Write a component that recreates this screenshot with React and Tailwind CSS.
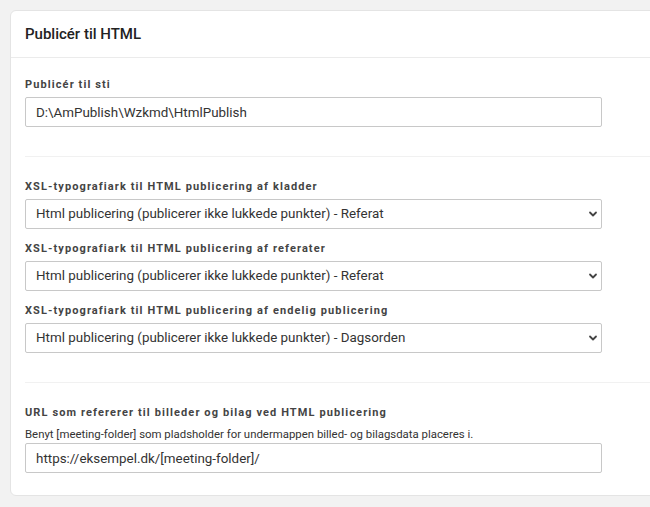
import React from "react";

const font = { fontFamily: "Roboto, 'Liberation Sans', sans-serif" };

const Label = ({ children }) => (
  <div className="text-[11px] leading-4 font-bold tracking-[0.1em] text-[#444] mb-1">
    {children}
  </div>
);

const TextInput = ({ value }) => (
  <input
    type="text"
    defaultValue={value}
    className="block w-[577px] h-[30px] px-[10px] text-[13.4px] text-[#333] border border-[#c8c8c8] rounded-[2px] outline-none bg-white"
  />
);

const Chevron = () => (
  <svg
    width="10"
    height="10"
    viewBox="0 0 10 10"
    className="absolute right-[4px] top-[10px] pointer-events-none"
  >
    <path d="M2 3.5 L5 6.5 L8 3.5" fill="none" stroke="#444" strokeWidth="1.8" strokeLinecap="round" strokeLinejoin="round" />
  </svg>
);

const Select = ({ value }) => (
  <div className="relative w-[577px]">
    <select
      defaultValue={value}
      className="block appearance-none w-full h-[30px] pl-[10px] pr-6 text-[13.4px] text-[#333] border border-[#c8c8c8] rounded-[2px] outline-none bg-white"
    >
      <option>{value}</option>
    </select>
    <Chevron />
  </div>
);

const App = () => {
  const xsl = [
    {
      label: "XSL-typografiark til HTML publicering af kladder",
      value: "Html publicering (publicerer ikke lukkede punkter) - Referat",
    },
    {
      label: "XSL-typografiark til HTML publicering af referater",
      value: "Html publicering (publicerer ikke lukkede punkter) - Referat",
    },
    {
      label: "XSL-typografiark til HTML publicering af endelig publicering",
      value: "Html publicering (publicerer ikke lukkede punkter) - Dagsorden",
    },
  ];

  return (
    <div className="min-h-[507px] w-[650px] overflow-hidden bg-[#f2f2f2] pt-[10px]" style={font}>
      <div className="ml-[10px] w-[680px] bg-white border border-[#e4e4e4] rounded-[6px]">
        <div className="h-[47px] flex items-center pl-[14px] border-b border-[#ebebeb]">
          <h1 className="text-[15px] font-medium text-[#222]">Publicér til HTML</h1>
        </div>

        <div className="ml-[14px]">
          <div className="pt-[19px] pb-[29px] border-b border-[#f1f1f1]">
            <Label>Publicér til sti</Label>
            <TextInput value="D:\AmPublish\Wzkmd\HtmlPublish" />
          </div>

          <div className="pt-[22px] pb-[29px] border-b border-[#f1f1f1] flex flex-col gap-[12px]">
            {xsl.map((item) => (
              <div key={item.label}>
                <Label>{item.label}</Label>
                <Select value={item.value} />
              </div>
            ))}
          </div>

          <div className="pt-[22px] pb-[22px]">
            <Label>URL som refererer til billeder og bilag ved HTML publicering</Label>
            <div className="text-[11.4px] leading-4 text-[#333] mt-[5px] mb-px">
              Benyt [meeting-folder] som pladsholder for undermappen billed- og bilagsdata placeres i.
            </div>
            <TextInput value="https://eksempel.dk/[meeting-folder]/" />
          </div>
        </div>
      </div>
    </div>
  );
};

export default App;
